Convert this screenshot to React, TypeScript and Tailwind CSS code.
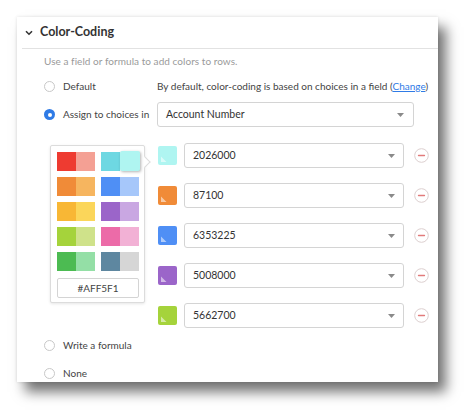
import React from "react";

const palette: [string, string, string, string][] = [
  ["#EE3B31", "#F4A094", "#6ED8E2", "#AFF5F1"],
  ["#F08B38", "#F6B55F", "#4F8FF5", "#A6C7FA"],
  ["#F8B735", "#FBD65A", "#9B65C9", "#C9A7E2"],
  ["#A5D33B", "#CFE28A", "#EC6BA8", "#F2B1D5"],
  ["#4CBB52", "#94DFA6", "#5E87A0", "#D6D6D6"],
];

const rows = [
  { color: "#AFF5F1", value: "2026000" },
  { color: "#F08B38", value: "87100" },
  { color: "#4F8FF5", value: "6353225" },
  { color: "#9B65C9", value: "5008000" },
  { color: "#A5D33B", value: "5662700" },
];

function Radio({ checked }: { checked?: boolean }) {
  if (checked) {
    return (
      <span className="flex h-[11px] w-[11px] shrink-0 items-center justify-center rounded-full bg-[#2F7BE6]">
        <span className="h-[4px] w-[4px] rounded-full bg-white" />
      </span>
    );
  }
  return <span className="h-[11px] w-[11px] shrink-0 rounded-full border border-[#c8c8c8] bg-white" />;
}

function Caret() {
  return (
    <svg width="7" height="4" viewBox="0 0 7 4" className="shrink-0">
      <path d="M0 0h7L3.5 4z" fill="#8a8a8a" />
    </svg>
  );
}

function Swatch({ color }: { color: string }) {
  return (
    <span className="relative block h-[19px] w-[19px] shrink-0 overflow-hidden rounded-[2px]" style={{ backgroundColor: color }}>
      <svg width="19" height="19" viewBox="0 0 19 19" className="absolute left-0 top-0">
        <path d="M3 16V10.5L8.5 16z" fill="rgba(255,255,255,0.55)" />
      </svg>
    </span>
  );
}

function Minus() {
  return (
    <svg width="15" height="15" viewBox="0 0 15 15" className="shrink-0">
      <circle cx="7.5" cy="7.5" r="6.8" fill="white" stroke="#dccfcf" strokeWidth="1" />
      <path d="M4.5 7.5h6" stroke="#e27b7b" strokeWidth="1.3" strokeLinecap="round" />
    </svg>
  );
}

export default function App() {
  return (
    <div className="h-[418px] w-[474px] bg-white pl-[17px] pt-[17px]" style={{ fontFamily: "Lato, 'Open Sans', sans-serif" }}>
      <div className="h-[365px] w-[421px] overflow-hidden bg-white shadow-[0_0_3px_rgba(0,0,0,0.12),8px_10px_12px_rgba(0,0,0,0.55)]">
        <div className="flex h-[31px] items-center pl-[8px]">
          <svg width="8" height="6" viewBox="0 0 8 6" className="mr-[7px] mt-[1px]">
            <path d="M1 1.2l3 3 3-3" fill="none" stroke="#333" strokeWidth="1.6" />
          </svg>
          <span className="text-[12.5px] font-bold text-[#333]">Color-Coding</span>
        </div>
        <div className="ml-[5px] border-t border-[#e2e2e2]" />
        <div className="pl-[27px]">
          <div className="flex h-[24px] items-center text-[10px] tracking-[0.05px] text-[#9a9a9a]">
            Use a field or formula to add colors to rows.
          </div>
          <div className="flex h-[26px] items-center text-[10px] text-[#444]">
            <div className="flex w-[113px] shrink-0 items-center gap-[8px]">
              <Radio />
              <span>Default</span>
            </div>
            <span className="whitespace-nowrap">
              By default, color-coding is based on choices in a field (
              <span className="text-[#2F7BE6] underline">Change</span>)
            </span>
          </div>
          <div className="mt-[3px] flex h-[25px] items-center text-[10px] text-[#444]">
            <div className="flex w-[113px] shrink-0 items-center gap-[8px]">
              <Radio checked />
              <span className="whitespace-nowrap">Assign to choices in</span>
            </div>
            <div className="flex h-[25px] w-[257px] items-center justify-between rounded-[3px] border border-[#d4d4d4] pl-[8px] pr-[9px] text-[10.5px] text-[#333]">
              <span>Account Number</span>
              <Caret />
            </div>
          </div>
          <div className="mt-[16px] flex">
            <div className="relative ml-[6px] mt-[2px] h-[158px] w-[95px] rounded-[2px] border border-[#dcdcdc] bg-white px-[6px] pt-[6px] shadow-[0_1px_3px_rgba(0,0,0,0.1)]">
              <div className="absolute right-[-5px] top-[12px] h-[8px] w-[8px] rotate-45 border-r border-t border-[#dcdcdc] bg-white" />
              <div className="flex flex-col gap-[6px]">
                {palette.map((r, i) => (
                  <div key={i} className="flex gap-[6px]">
                    <div className="flex">
                      <span className="h-[19px] w-[19px]" style={{ backgroundColor: r[0] }} />
                      <span className="h-[19px] w-[19px]" style={{ backgroundColor: r[1] }} />
                    </div>
                    <div className="flex">
                      <span className="h-[19px] w-[19px]" style={{ backgroundColor: r[2] }} />
                      {i === 0 ? (
                        <span className="relative z-10 -mt-[1px] h-[20px] w-[20px] rounded-[2px] shadow-[1px_1px_3px_rgba(0,0,0,0.3)]" style={{ backgroundColor: r[3] }} />
                      ) : (
                        <span className="h-[19px] w-[19px]" style={{ backgroundColor: r[3] }} />
                      )}
                    </div>
                  </div>
                ))}
              </div>
              <div className="mt-[7px] flex h-[20px] w-[82px] items-center justify-center rounded-[2px] border border-[#d4d4d4] text-[10px] text-[#444]">
                #AFF5F1
              </div>
            </div>
            <div className="ml-[13px] flex flex-col gap-[15px]">
              {rows.map((r) => (
                <div key={r.value} className="flex h-[25px] items-center">
                  <Swatch color={r.color} />
                  <div className="ml-[7px] flex h-[25px] w-[220px] items-center justify-between rounded-[3px] border border-[#d4d4d4] pl-[8px] pr-[8px] text-[10.5px] text-[#333]">
                    <span>{r.value}</span>
                    <Caret />
                  </div>
                  <div className="ml-[10px]">
                    <Minus />
                  </div>
                </div>
              ))}
            </div>
          </div>
          <div className="mt-[5px] flex h-[24px] items-center gap-[8px] text-[10px] text-[#444]">
            <Radio />
            <span>Write a formula</span>
          </div>
          <div className="mt-[4px] flex h-[24px] items-center gap-[8px] text-[10px] text-[#444]">
            <Radio />
            <span>None</span>
          </div>
        </div>
      </div>
    </div>
  );
}
